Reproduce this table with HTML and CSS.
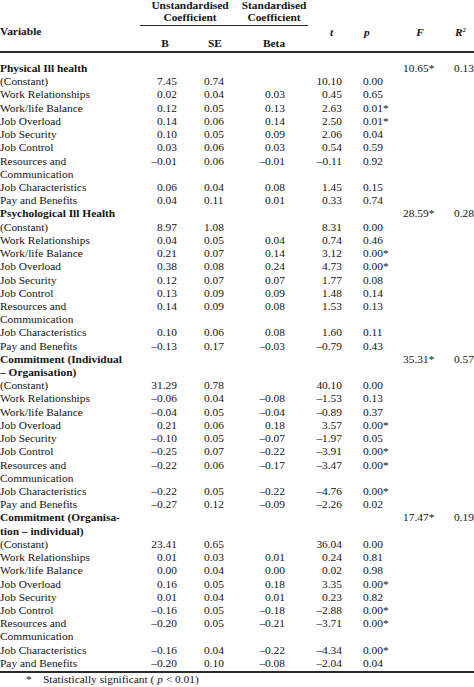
FILE: index.html
```html
<!DOCTYPE html>
<html>
<head>
<meta charset="utf-8">
<link rel="stylesheet" href="styles.css">
</head>
<body>
<table class="reg">
<colgroup>
<col class="c-var"><col class="c-b"><col class="c-se"><col class="c-beta"><col class="c-t"><col class="c-p"><col class="c-f"><col class="c-r">
</colgroup>
<thead>
<tr class="h1">
<th rowspan="2" class="hvar">Variable</th>
<th colspan="2" class="grp">Unstandardised<br>Coefficient</th>
<th class="grp">Standardised<br>Coefficient</th>
<th rowspan="2" class="hst"><i>t</i></th>
<th rowspan="2" class="hst hp"><i>p</i></th>
<th rowspan="2" class="hst"><i>F</i></th>
<th rowspan="2" class="hst hr"><i>R<sup>2</sup></i></th>
</tr>
<tr class="h2">
<th>B</th><th>SE</th><th>Beta</th>
</tr>
</thead>
<tbody>
<tr class="sec first"><td class="var">Physical Ill health</td><td class="b"></td><td class="se"></td><td class="beta"></td><td class="t"></td><td class="p"></td><td class="f">10.65*</td><td class="r">0.13</td></tr>
<tr><td class="var">(Constant)</td><td class="b">7.45</td><td class="se">0.74</td><td class="beta"></td><td class="t">10.10</td><td class="p">0.00</td><td></td><td></td></tr>
<tr><td class="var">Work Relationships</td><td class="b">0.02</td><td class="se">0.04</td><td class="beta">0.03</td><td class="t">0.45</td><td class="p">0.65</td><td></td><td></td></tr>
<tr><td class="var">Work/life Balance</td><td class="b">0.12</td><td class="se">0.05</td><td class="beta">0.13</td><td class="t">2.63</td><td class="p">0.01*</td><td></td><td></td></tr>
<tr><td class="var">Job Overload</td><td class="b">0.14</td><td class="se">0.06</td><td class="beta">0.14</td><td class="t">2.50</td><td class="p">0.01*</td><td></td><td></td></tr>
<tr><td class="var">Job Security</td><td class="b">0.10</td><td class="se">0.05</td><td class="beta">0.09</td><td class="t">2.06</td><td class="p">0.04</td><td></td><td></td></tr>
<tr><td class="var">Job Control</td><td class="b">0.03</td><td class="se">0.06</td><td class="beta">0.03</td><td class="t">0.54</td><td class="p">0.59</td><td></td><td></td></tr>
<tr><td class="var">Resources and<br>Communication</td><td class="b">–0.01</td><td class="se">0.06</td><td class="beta">–0.01</td><td class="t">–0.11</td><td class="p">0.92</td><td></td><td></td></tr>
<tr><td class="var">Job Characteristics</td><td class="b">0.06</td><td class="se">0.04</td><td class="beta">0.08</td><td class="t">1.45</td><td class="p">0.15</td><td></td><td></td></tr>
<tr><td class="var">Pay and Benefits</td><td class="b">0.04</td><td class="se">0.11</td><td class="beta">0.01</td><td class="t">0.33</td><td class="p">0.74</td><td></td><td></td></tr>

<tr class="sec"><td class="var">Psychological Ill Health</td><td class="b"></td><td class="se"></td><td class="beta"></td><td class="t"></td><td class="p"></td><td class="f">28.59*</td><td class="r">0.28</td></tr>
<tr><td class="var">(Constant)</td><td class="b">8.97</td><td class="se">1.08</td><td class="beta"></td><td class="t">8.31</td><td class="p">0.00</td><td></td><td></td></tr>
<tr><td class="var">Work Relationships</td><td class="b">0.04</td><td class="se">0.05</td><td class="beta">0.04</td><td class="t">0.74</td><td class="p">0.46</td><td></td><td></td></tr>
<tr><td class="var">Work/life Balance</td><td class="b">0.21</td><td class="se">0.07</td><td class="beta">0.14</td><td class="t">3.12</td><td class="p">0.00*</td><td></td><td></td></tr>
<tr><td class="var">Job Overload</td><td class="b">0.38</td><td class="se">0.08</td><td class="beta">0.24</td><td class="t">4.73</td><td class="p">0.00*</td><td></td><td></td></tr>
<tr><td class="var">Job Security</td><td class="b">0.12</td><td class="se">0.07</td><td class="beta">0.07</td><td class="t">1.77</td><td class="p">0.08</td><td></td><td></td></tr>
<tr><td class="var">Job Control</td><td class="b">0.13</td><td class="se">0.09</td><td class="beta">0.09</td><td class="t">1.48</td><td class="p">0.14</td><td></td><td></td></tr>
<tr><td class="var">Resources and<br>Communication</td><td class="b">0.14</td><td class="se">0.09</td><td class="beta">0.08</td><td class="t">1.53</td><td class="p">0.13</td><td></td><td></td></tr>
<tr><td class="var">Job Characteristics</td><td class="b">0.10</td><td class="se">0.06</td><td class="beta">0.08</td><td class="t">1.60</td><td class="p">0.11</td><td></td><td></td></tr>
<tr><td class="var">Pay and Benefits</td><td class="b">–0.13</td><td class="se">0.17</td><td class="beta">–0.03</td><td class="t">–0.79</td><td class="p">0.43</td><td></td><td></td></tr>

<tr class="sec"><td class="var">Commitment (Individual<br>– Organisation)</td><td class="b"></td><td class="se"></td><td class="beta"></td><td class="t"></td><td class="p"></td><td class="f">35.31*</td><td class="r">0.57</td></tr>
<tr><td class="var">(Constant)</td><td class="b">31.29</td><td class="se">0.78</td><td class="beta"></td><td class="t">40.10</td><td class="p">0.00</td><td></td><td></td></tr>
<tr><td class="var">Work Relationships</td><td class="b">–0.06</td><td class="se">0.04</td><td class="beta">–0.08</td><td class="t">–1.53</td><td class="p">0.13</td><td></td><td></td></tr>
<tr><td class="var">Work/life Balance</td><td class="b">–0.04</td><td class="se">0.05</td><td class="beta">–0.04</td><td class="t">–0.89</td><td class="p">0.37</td><td></td><td></td></tr>
<tr><td class="var">Job Overload</td><td class="b">0.21</td><td class="se">0.06</td><td class="beta">0.18</td><td class="t">3.57</td><td class="p">0.00*</td><td></td><td></td></tr>
<tr><td class="var">Job Security</td><td class="b">–0.10</td><td class="se">0.05</td><td class="beta">–0.07</td><td class="t">–1.97</td><td class="p">0.05</td><td></td><td></td></tr>
<tr><td class="var">Job Control</td><td class="b">–0.25</td><td class="se">0.07</td><td class="beta">–0.22</td><td class="t">–3.91</td><td class="p">0.00*</td><td></td><td></td></tr>
<tr><td class="var">Resources and<br>Communication</td><td class="b">–0.22</td><td class="se">0.06</td><td class="beta">–0.17</td><td class="t">–3.47</td><td class="p">0.00*</td><td></td><td></td></tr>
<tr><td class="var">Job Characteristics</td><td class="b">–0.22</td><td class="se">0.05</td><td class="beta">–0.22</td><td class="t">–4.76</td><td class="p">0.00*</td><td></td><td></td></tr>
<tr><td class="var">Pay and Benefits</td><td class="b">–0.27</td><td class="se">0.12</td><td class="beta">–0.09</td><td class="t">–2.26</td><td class="p">0.02</td><td></td><td></td></tr>

<tr class="sec"><td class="var">Commitment (Organisa-<br>tion – individual)</td><td class="b"></td><td class="se"></td><td class="beta"></td><td class="t"></td><td class="p"></td><td class="f">17.47*</td><td class="r">0.19</td></tr>
<tr><td class="var">(Constant)</td><td class="b">23.41</td><td class="se">0.65</td><td class="beta"></td><td class="t">36.04</td><td class="p">0.00</td><td></td><td></td></tr>
<tr><td class="var">Work Relationships</td><td class="b">0.01</td><td class="se">0.03</td><td class="beta">0.01</td><td class="t">0.24</td><td class="p">0.81</td><td></td><td></td></tr>
<tr><td class="var">Work/life Balance</td><td class="b">0.00</td><td class="se">0.04</td><td class="beta">0.00</td><td class="t">0.02</td><td class="p">0.98</td><td></td><td></td></tr>
<tr><td class="var">Job Overload</td><td class="b">0.16</td><td class="se">0.05</td><td class="beta">0.18</td><td class="t">3.35</td><td class="p">0.00*</td><td></td><td></td></tr>
<tr><td class="var">Job Security</td><td class="b">0.01</td><td class="se">0.04</td><td class="beta">0.01</td><td class="t">0.23</td><td class="p">0.82</td><td></td><td></td></tr>
<tr><td class="var">Job Control</td><td class="b">–0.16</td><td class="se">0.05</td><td class="beta">–0.18</td><td class="t">–2.88</td><td class="p">0.00*</td><td></td><td></td></tr>
<tr><td class="var">Resources and<br>Communication</td><td class="b">–0.20</td><td class="se">0.05</td><td class="beta">–0.21</td><td class="t">–3.71</td><td class="p">0.00*</td><td></td><td></td></tr>
<tr><td class="var">Job Characteristics</td><td class="b">–0.16</td><td class="se">0.04</td><td class="beta">–0.22</td><td class="t">–4.34</td><td class="p">0.00*</td><td></td><td></td></tr>
<tr class="last"><td class="var">Pay and Benefits</td><td class="b">–0.20</td><td class="se">0.10</td><td class="beta">–0.08</td><td class="t">–2.04</td><td class="p">0.04</td><td></td><td></td></tr>
</tbody>
</table>
<p class="note"><span class="star">*</span><span>Statistically significant ( <i>p</i> &lt; 0.01)</span></p>
</body>
</html>
```
FILE: styles.css
```css
html, body {
  margin: 0;
  padding: 0;
  background: #ffffff;
  overflow: hidden;
}
body {
  font-family: "Liberation Serif", "Times New Roman", serif;
  font-size: 11.4px;
  color: #141414;
  width: 474px;
  height: 687px;
}
.reg {
  border-collapse: collapse;
  table-layout: fixed;
  width: 490px;
  margin-top: -1px;
}
.c-var { width: 140px; }
.c-b { width: 50px; }
.c-se { width: 50px; }
.c-beta { width: 68px; }
.c-t { width: 47px; }
.c-p { width: 40px; }
.c-f { width: 50px; }
.c-r { width: 45px; }

th, td {
  padding: 0;
  font-weight: normal;
  white-space: nowrap;
}
thead th {
  font-weight: bold;
  line-height: 12px;
}
.h1 .grp {
  text-align: center;
  vertical-align: top;
  padding-bottom: 2px;
  border-bottom: 1px solid #2a2a2a;
}
.hvar {
  text-align: left;
  vertical-align: bottom;
  padding-bottom: 14px;
  padding-left: 0;
}
.hst {
  vertical-align: bottom;
  padding-bottom: 13px;
  text-align: center;
}
.hst.hp { text-align: left; padding-left: 9px; }
.hst.hr { text-align: left; padding-left: 10px; }
.hst sup {
  font-size: 6px;
  vertical-align: 4px;
  line-height: 0;
}
.h2 th {
  text-align: center;
  padding-top: 11px;
  padding-bottom: 2px;
}
thead tr.h2 th, thead .hvar, thead .hst {
  border-bottom: 2px solid #2a2a2a;
}

tbody td {
  line-height: 13.22px;
  vertical-align: top;
}
tbody tr.first td { padding-top: 9px; }
tbody tr.last td {
  padding-bottom: 1px;
  border-bottom: 2px solid #2a2a2a;
}
.sec .var { font-weight: bold; }
.b { text-align: right; padding-right: 13px; }
.se { text-align: left; padding-left: 14px; }
.beta { text-align: right; padding-right: 23px; }
.t { text-align: right; padding-right: 13px; }
.p { text-align: left; padding-left: 8px; }
.f { text-align: left; padding-left: 8px; }
.r { text-align: left; padding-left: 9px; }

.note {
  margin: 0;
  line-height: 13.22px;
  display: flex;
}
.star {
  width: 43px;
  padding-left: 26px;
  box-sizing: border-box;
}
```
